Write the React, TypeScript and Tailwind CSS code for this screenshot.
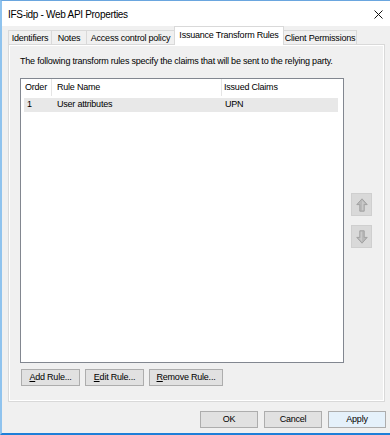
import React from "react";

const font = { fontFamily: '"Liberation Sans", Arial, sans-serif' };

function Tab({ label, className }: { label: string; className: string }) {
  return (
    <div className={`flex items-center justify-center border-[#d9d9d9] whitespace-nowrap ${className}`}>
      <span className="leading-none">{label}</span>
    </div>
  );
}

function Btn({ children, className = "" }: { children: React.ReactNode; className?: string }) {
  return (
    <div
      className={`h-[17px] flex items-center justify-center border border-[#adadad] bg-[#e1e1e1] leading-none whitespace-nowrap ${className}`}
    >
      {children}
    </div>
  );
}

function Arrow({ down }: { down?: boolean }) {
  return (
    <div className="w-[21px] h-[23px] flex items-center justify-center bg-[#d9d9d9] border border-[#cfcfcf]">
      <svg width="12" height="14" viewBox="0 0 12 14" className={down ? "rotate-180" : ""}>
        <polygon
          points="6,0.8 11.2,6.6 8.2,6.6 8.2,13.2 3.8,13.2 3.8,6.6 0.8,6.6"
          fill="#b9b9b9"
          stroke="#a2a2a2"
          strokeWidth="1"
        />
        <polygon points="6,2.4 9,5.8 7.4,5.8 7.4,12.2 6,12.2" fill="#c9c9c9" />
      </svg>
    </div>
  );
}

export default function App() {
  return (
    <div
      style={font}
      className="w-[390px] h-[435px] overflow-hidden flex flex-col bg-[#f0f0f0] text-black text-[9px] tracking-[-0.22px] border-l-2 border-l-[#8fc3ee] border-t border-t-[#6aa6df] border-b-2 border-b-[#1e7fd8]"
    >
      {/* Title bar */}
      <div className="h-[25px] shrink-0 bg-white flex items-center justify-between pl-[6px] pr-[7px]">
        <span className="text-[10px] tracking-[-0.3px] leading-none mt-[2px]">IFS-idp - Web API Properties</span>
        <svg width="9" height="9" viewBox="0 0 9 9" className="mt-[2px]">
          <path d="M0.5 0.5 L8.5 8.5 M8.5 0.5 L0.5 8.5" stroke="#111" strokeWidth="1" />
        </svg>
      </div>

      {/* Tabs */}
      <div className="h-[19px] shrink-0 -mb-px ml-[6px] flex items-end">
        <Tab label="Identifiers" className="w-[43px] h-[15px] border-l border-t bg-[#f0f0f0]" />
        <Tab label="Notes" className="w-[35px] h-[15px] border-l border-t bg-[#f0f0f0]" />
        <Tab label="Access control policy" className="w-[88px] h-[15px] border-l border-t bg-[#f0f0f0]" />
        <Tab label="Issuance Transform Rules" className="relative z-10 w-[110px] h-[19px] border-l border-r border-t bg-white pb-[2px]" />
        <Tab label="Client Permissions" className="w-[73px] h-[15px] border-r border-t bg-[#f0f0f0]" />
      </div>

      {/* Tab page */}
      <div className="ml-[6px] w-[377px] h-[358px] shrink-0 border border-[#d9d9d9] bg-white p-px">
        <div className="h-full bg-[#f0f0f0] flex flex-col pl-[10px]">
          <p className="mt-[9px] leading-[12px] whitespace-nowrap">
            The following transform rules specify the claims that will be sent to the relying party.
          </p>

          <div className="mt-[11px] flex">
            <div className="w-[324px] h-[285px] border border-[#828790] bg-white flex flex-col">
              <div className="h-[17px] flex">
                <div className="w-[31px] border-r border-[#e5e5e5] flex items-center pl-[4px]">Order</div>
                <div className="w-[170px] border-r border-[#e5e5e5] flex items-center pl-[5px]">Rule Name</div>
                <div className="flex-1 flex items-center pl-[2px]">Issued Claims</div>
              </div>
              <div className="mt-[2px] ml-[3px] mr-[5px] h-[14px] bg-[#e8e8e8] flex items-center">
                <div className="w-[28px] pl-[3px]">1</div>
                <div className="w-[171px] pl-[5px]">User attributes</div>
                <div className="flex-1 pl-[2px]">UPN</div>
              </div>
            </div>

            <div className="ml-[7px] mt-[115px] flex flex-col gap-[9px]">
              <Arrow />
              <Arrow down />
            </div>
          </div>

          <div className="mt-[6px] ml-px flex gap-[5px]">
            <Btn className="w-[59px]">
              <span className="underline underline-offset-1">A</span>dd Rule...
            </Btn>
            <Btn className="w-[59px]">
              <span className="underline underline-offset-1">E</span>dit Rule...
            </Btn>
            <Btn className="w-[74px]">
              <span className="underline underline-offset-1">R</span>emove Rule...
            </Btn>
          </div>
        </div>
      </div>

      {/* Dialog buttons */}
      <div className="mt-[9px] pr-[4px] flex justify-end gap-[6px]">
        <Btn className="w-[58px]">OK</Btn>
        <Btn className="w-[58px]">Cancel</Btn>
        <Btn className="w-[58px] border-[#0078d7] bg-[#e5f1fb]">Apply</Btn>
      </div>
    </div>
  );
}
